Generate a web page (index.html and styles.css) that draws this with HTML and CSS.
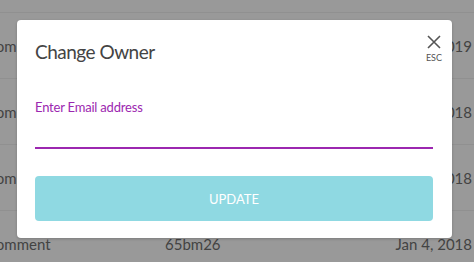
FILE: index.html
```html
<!DOCTYPE html>
<html>
<head>
<meta charset="utf-8">
<link rel="stylesheet" href="styles.css">
</head>
<body>
<div class="table">
  <div class="row"><span class="c1">Comment</span><span class="c2">65bm26</span><span class="c3">Jan 4, 2019</span></div>
  <div class="row"><span class="c1">Comment</span><span class="c2">65bm26</span><span class="c3">Jan 4, 2018</span></div>
  <div class="row"><span class="c1">Comment</span><span class="c2">65bm26</span><span class="c3">Jan 4, 2018</span></div>
  <div class="row"><span class="c1">Comment</span><span class="c2">65bm26</span><span class="c3">Jan 4, 2018</span></div>
</div>
<div class="overlay">
  <div class="modal">
    <div class="head">
      <h2 class="title">Change Owner</h2>
      <button class="close">
        <svg width="14" height="14" viewBox="0 0 14 14"><path d="M1 1L13 13M13 1L1 13" stroke="#555" stroke-width="1.6" fill="none"/></svg>
        <span class="esc">ESC</span>
      </button>
    </div>
    <label class="label">Enter Email address</label>
    <div class="input"></div>
    <button class="update">UPDATE</button>
  </div>
</div>
</body>
</html>
```
FILE: styles.css
```css
html, body {
  margin: 0;
  padding: 0;
  width: 474px;
  height: 262px;
  overflow: hidden;
  font-family: Lato, "Open Sans", sans-serif;
}
body { position: relative; background: #fff; }
.table {
  padding-top: 12px;
  height: 262px;
  box-sizing: border-box;
  overflow: hidden;
}
.row {
  height: 65px;
  border-top: 1px solid #f0f0f0;
  display: flex;
  align-items: center;
  font-size: 15px;
  color: #707070;
}
.c1 { margin-left: -14px; width: 179px; }
.c2 { width: 150px; }
.c3 { margin-left: auto; margin-right: 2px; }
.overlay {
  position: absolute;
  inset: 0;
  background: rgba(0, 0, 0, 0.4);
  padding: 20px 0 0 17px;
}
.modal {
  width: 435px;
  height: 218px;
  box-sizing: border-box;
  background: #fff;
  border-radius: 4px;
  box-shadow: 0 1px 3px rgba(0,0,0,0.2);
  padding: 0 18px 0 18px;
  display: flex;
  flex-direction: column;
}
.head {
  display: flex;
  justify-content: space-between;
  align-items: flex-start;
  height: 75px;
}
.title {
  margin: 0;
  padding-top: 20px;
  font-size: 19px;
  letter-spacing: -0.5px;
  font-weight: 400;
  color: #444;
  line-height: 24px;
}
.close {
  border: 0;
  background: none;
  padding: 15px 0 0 0;
  margin-right: -8px;
  display: flex;
  flex-direction: column;
  align-items: center;
  font-family: inherit;
  cursor: pointer;
}
.close svg { display: block; }
.esc {
  font-size: 9px;
  color: #555;
  margin-top: 4px;
  line-height: 10px;
}
.label {
  font-size: 13px;
  letter-spacing: -0.2px;
  color: #9c27b0;
  line-height: 16px;
  margin-top: 4px;
}
.input {
  height: 32px;
  border-bottom: 2px solid #9c27b0;
  margin-right: 1px;
}
.update {
  margin-top: 27px;
  height: 45px;
  margin-right: 1px;
  border: 0;
  border-radius: 4px;
  background: #8fd9e2;
  color: #fff;
  font-family: inherit;
  font-size: 13px;
}
```
